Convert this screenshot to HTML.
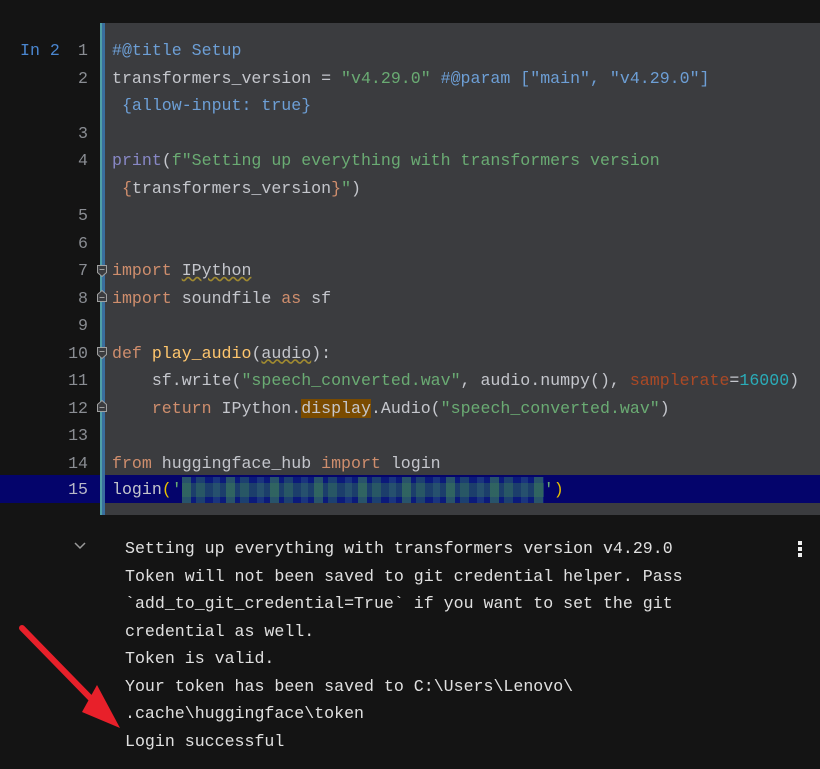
<!DOCTYPE html>
<html><head><meta charset="utf-8">
<style>
html,body{margin:0;padding:0}
body{width:820px;height:769px;background:#141414;position:relative;overflow:hidden;font-family:"Liberation Mono","DejaVu Sans Mono",monospace;font-size:16.6px;}
.cell{position:absolute;left:100px;top:23px;width:720px;height:492px;background:#3b3c3f;}
.bar1{position:absolute;left:100px;top:23px;width:2px;height:492px;background:#4f9fa6;}
.bar2{position:absolute;left:102px;top:23px;width:3px;height:492px;background:#3a6e9e;}
.sel{position:absolute;left:0;top:475px;width:820px;height:28px;background:#04046b;}
.l{position:absolute;left:112px;height:27.5px;line-height:27.5px;white-space:pre;color:#c4c6cc;}
.n{position:absolute;left:60px;width:28px;text-align:right;height:27.5px;line-height:27.5px;color:#8a8d93;}
.k{color:#cf8e6d}.s{color:#6aab73}.c{color:#6d9fd6}.p{color:#8888c6}.o{color:#cf8e6d}
.f{color:#ffc66d}.np{color:#aa4926}.num{color:#2aacb8}
.hl{background:#7a4b00}
.o2{position:absolute;left:125px;height:27.5px;line-height:27.5px;white-space:pre;color:#e0e0e0;}
.fold{position:absolute;left:96px;}
.tok{display:inline-block;width:362px;height:26px;vertical-align:middle;
background:
linear-gradient(180deg,transparent 0 6px,rgba(60,130,80,.35) 6px 20px,transparent 20px),
repeating-linear-gradient(90deg,rgba(70,140,90,.5) 0 9px,transparent 9px 14px,rgba(50,110,100,.45) 14px 23px,transparent 23px 31px,rgba(40,80,130,.5) 31px 38px,transparent 38px 44px),
#0b1a7a;}
</style></head><body>
<div class="cell"></div>
<div class="sel"></div>
<div class="bar1"></div><div class="bar2"></div>

<div style="position:absolute;left:20px;top:37px;line-height:27.5px;color:#4a86d0">In 2</div>

<div class="n" style="top:37px">1</div>
<div class="l" style="top:37px"><span class="c">#@title Setup</span></div>
<div class="n" style="top:64.5px">2</div>
<div class="l" style="top:64.5px">transformers_version = <span class="s">"v4.29.0"</span> <span class="c">#@param ["main", "v4.29.0"]</span></div>
<div class="l" style="top:92px"> <span class="c">{allow-input: true}</span></div>
<div class="n" style="top:119.5px">3</div>
<div class="n" style="top:147px">4</div>
<div class="l" style="top:147px"><span class="p">print</span>(<span class="s">f"Setting up everything with transformers version</span></div>
<div class="l" style="top:174.5px"> <span class="o">{</span>transformers_version<span class="o">}</span><span class="s">"</span>)</div>
<div class="n" style="top:202px">5</div>
<div class="n" style="top:229.5px">6</div>
<div class="n" style="top:257px">7</div>
<div class="l" style="top:257px"><span class="k">import</span> <span style="text-decoration:underline wavy #a08a30">IPython</span></div>
<div class="n" style="top:284.5px">8</div>
<div class="l" style="top:284.5px"><span class="k">import</span> soundfile <span class="k">as</span> sf</div>
<div class="n" style="top:312px">9</div>
<div class="n" style="top:339.5px">10</div>
<div class="l" style="top:339.5px"><span class="k">def</span> <span class="f">play_audio</span>(<span style="text-decoration:underline wavy #a08a30">audio</span>):</div>
<div class="n" style="top:367px">11</div>
<div class="l" style="top:367px">    sf.write(<span class="s">"speech_converted.wav"</span>, audio.numpy(), <span class="np">samplerate</span>=<span class="num">16000</span>)</div>
<div class="n" style="top:394.5px">12</div>
<div class="l" style="top:394.5px">    <span class="k">return</span> IPython.<span class="hl">display</span>.Audio(<span class="s">"speech_converted.wav"</span>)</div>
<div class="n" style="top:422px">13</div>
<div class="n" style="top:449.5px">14</div>
<div class="l" style="top:449.5px"><span class="k">from</span> huggingface_hub <span class="k">import</span> login</div>
<div class="n" style="top:476px;color:#b8b8c8">15</div>
<div class="l" style="top:476px">login<span style="color:#e8c000">(</span><span class="s">'</span><span class="tok"></span><span class="s">'</span><span style="color:#e8c000">)</span></div>

<svg class="fold" style="top:264px" width="12" height="14"><path d="M1.5 1.5h9v7l-4.5 4-4.5-4z" fill="#3b3c3f" stroke="#a0a0a0"/><path d="M3.5 5.5h5" stroke="#a0a0a0"/></svg>
<svg class="fold" style="top:289px" width="12" height="14"><path d="M1.5 12.5h9v-7l-4.5-4-4.5 4z" fill="#3b3c3f" stroke="#a0a0a0"/><path d="M3.5 8.5h5" stroke="#a0a0a0"/></svg>
<svg class="fold" style="top:346px" width="12" height="14"><path d="M1.5 1.5h9v7l-4.5 4-4.5-4z" fill="#3b3c3f" stroke="#a0a0a0"/><path d="M3.5 5.5h5" stroke="#a0a0a0"/></svg>
<svg class="fold" style="top:399px" width="12" height="14"><path d="M1.5 12.5h9v-7l-4.5-4-4.5 4z" fill="#3b3c3f" stroke="#a0a0a0"/><path d="M3.5 8.5h5" stroke="#a0a0a0"/></svg>

<svg style="position:absolute;left:72px;top:540px" width="16" height="12"><path d="M3 3 L8 8 L13 3" stroke="#9a9a9a" stroke-width="1.5" fill="none"/></svg>
<div style="position:absolute;left:798px;top:541px;width:4px;height:4px;background:#eee"></div>
<div style="position:absolute;left:798px;top:547px;width:4px;height:4px;background:#eee"></div>
<div style="position:absolute;left:798px;top:553px;width:4px;height:4px;background:#eee"></div>

<div class="o2" style="top:535px">Setting up everything with transformers version v4.29.0</div>
<div class="o2" style="top:562.5px">Token will not been saved to git credential helper. Pass</div>
<div class="o2" style="top:590px">`add_to_git_credential=True` if you want to set the git</div>
<div class="o2" style="top:617.5px">credential as well.</div>
<div class="o2" style="top:645px">Token is valid.</div>
<div class="o2" style="top:672.5px">Your token has been saved to C:\Users\Lenovo\</div>
<div class="o2" style="top:700px">.cache\huggingface\token</div>
<div class="o2" style="top:727.5px">Login successful</div>

<svg style="position:absolute;left:0;top:600px" width="140" height="140">
<line x1="22" y1="28" x2="104" y2="112" stroke="#e8202a" stroke-width="6" stroke-linecap="round"/>
<polygon points="120,128 97,85 82,112" fill="#e8202a"/>
</svg>
</body></html>
